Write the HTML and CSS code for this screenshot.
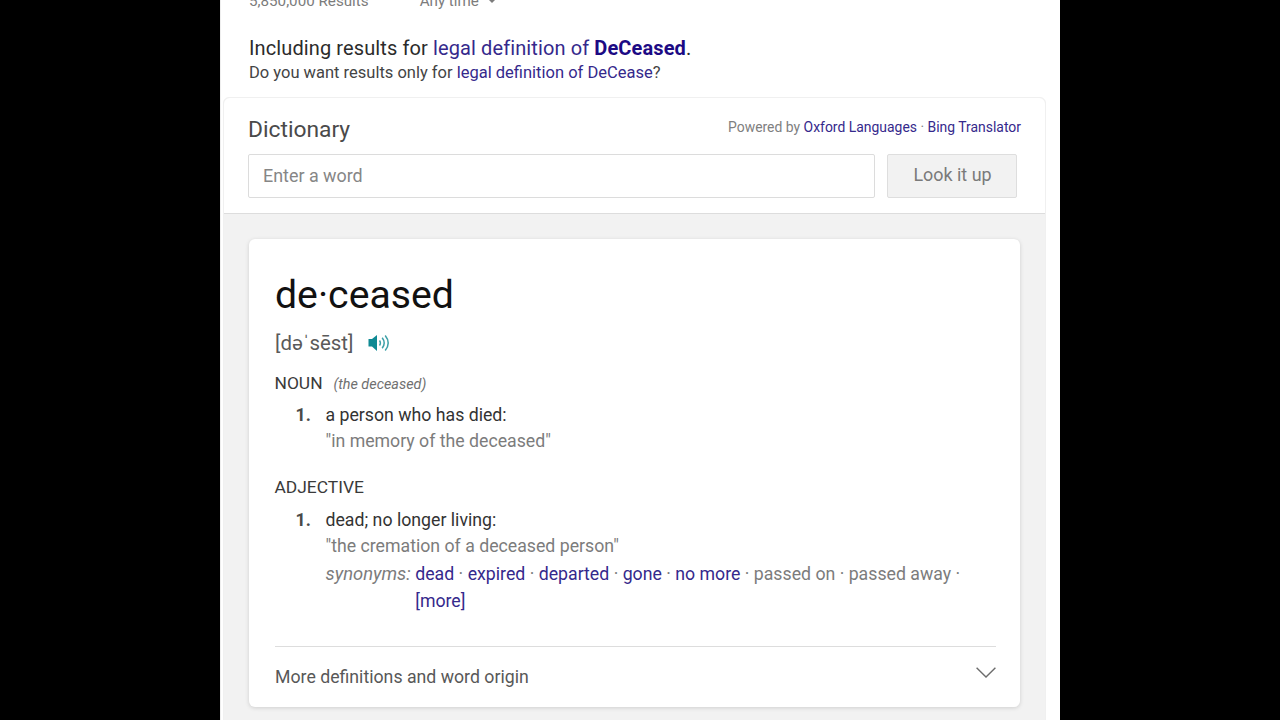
FILE: index.html
```html
<!DOCTYPE html>
<html lang="en">
<head>
    <meta charset="UTF-8">
    <meta name="viewport" content="width=device-width, initial-scale=1.0">
    <title>legal definition of DeCease</title>
    <link rel="stylesheet" href="styles.css">
</head>
<body>
    <div class="page">
        <div class="result-bar">
            <span class="count">5,850,000 Results</span>
            <span class="filter">Any time</span>
            <span class="caret"></span>
        </div>

        <div class="including"><span>Including results for <a href="#">legal definition of <strong>DeCeased</strong></a>.</span></div>
        <div class="only-for"><span>Do you want results only for <a href="#">legal definition of DeCease</a>?</span></div>

        <div class="dictionary">
            <div class="lookup">
                <div class="lookup-head">
                    <h2><span>Dictionary</span></h2>
                    <div class="powered"><span>Powered by <a href="#">Oxford Languages</a> · <a href="#">Bing Translator</a></span></div>
                </div>
                <div class="lookup-form">
                    <input type="text" class="word-input" placeholder="Enter a word">
                    <button class="look-btn">Look it up</button>
                </div>
            </div>

            <div class="entry">
                <h1><span>de·ceased</span></h1>
                <div class="pronounce">
                    <span class="phonetic">[dəˈsēst]</span>
                    <svg class="speaker" width="24" height="20" viewBox="0 0 24 20">
                        <path d="M.5 6h3.500L9 2v16L4 13.500H.5z" fill="#0f8a94"/>
                        <path d="M11.500 7.500q1.800 2.500 0 5M14.200 4.800q4 5.200 0 10.400M17.200 2.500q6 7.500 0 15" fill="none" stroke="#3da0a8" stroke-width="1.500"/>
                    </svg>
                </div>

                <div class="pos"><span>NOUN</span> <em>(the deceased)</em></div>
                <div class="sense">
                    <span class="num">1.</span>
                    <div>
                        <div class="meaning"><span>a person who has died:</span></div>
                        <div class="example"><span>"in memory of the deceased"</span></div>
                    </div>
                </div>

                <div class="pos pos-adj"><span>ADJECTIVE</span></div>
                <div class="sense">
                    <span class="num">1.</span>
                    <div>
                        <div class="meaning"><span>dead; no longer living:</span></div>
                        <div class="example"><span>"the cremation of a deceased person"</span></div>
                        <div class="synonyms">
                            <em>synonyms:</em>
                            <div class="syn-list"><a href="#">dead</a> · <a href="#">expired</a> · <a href="#">departed</a> · <a href="#">gone</a> · <a href="#">no more</a> · passed on · passed away ·<br><a href="#">[more]</a></div>
                        </div>
                    </div>
                </div>

                <div class="more">
                    <span>More definitions and word origin</span>
                    <svg width="20" height="12" viewBox="0 0 20 12">
                        <path d="M.6 1.700L10 11l9.400-9.300" fill="none" stroke="#6c6c6c" stroke-width="1.400"/>
                    </svg>
                </div>
            </div>
        </div>
    </div>
</body>
</html>
```
FILE: styles.css
```css
* {
    margin: 0;
    padding: 0;
    box-sizing: border-box;
}

body {
    font-family: Roboto, sans-serif;
    background-color: #000;
    height: 720px;
    overflow: hidden;
}

a {
    color: #35298c;
    text-decoration: none;
}

.page {
    width: 840px;
    height: 720px;
    margin: 0 auto;
    background-color: #fff;
    border-left: 1px solid #eee;
    overflow: hidden;
}

.result-bar {
    display: flex;
    align-items: center;
    height: 20px;
    margin: -9px 0 0 28px;
    font-size: 15.2px;
    color: #7c7c7c;
}

.filter {
    margin-left: 51px;
}

.caret {
    margin: 1px 0 0 10px;
    border: 3px solid transparent;
    border-top-color: #7c7c7c;
    border-bottom: 0;
}

.including {
    margin: 24px 0 0 28px;
    font-size: 20px;
    line-height: 26px;
    letter-spacing: 0.11px;
    color: #2b2b2b;
}

.including strong {
    color: #1c0a84;
}

.only-for {
    margin-left: 28px;
    font-size: 16.5px;
    line-height: 24px;
    color: #444;
}

.dictionary {
    width: 823px;
    height: 660px;
    margin: 12px 0 0 2px;
    background-color: #f2f2f2;
    border: 1px solid #f0f0f0;
    border-radius: 6px;
}

.lookup {
    height: 116px;
    padding: 20px 28px 0 24px;
    background-color: #fff;
    border-bottom: 1px solid #ddd;
    border-radius: 6px 6px 0 0;
}

.lookup-head {
    display: flex;
    justify-content: space-between;
    height: 36px;
    margin-right: -4px;
}

.lookup-head h2 {
    font-size: 22.8px;
    font-weight: 400;
    line-height: 24px;
    color: #4a4a4a;
}

.powered {
    font-size: 13.93px;
    line-height: 18px;
    color: #808080;
}

.lookup-form {
    display: flex;
    gap: 12px;
}

.word-input {
    flex: 1;
    height: 44px;
    padding: 0 14px 2px;
    border: 1px solid #dcdcdc;
    border-radius: 2px;
    font: 17.9px Roboto, sans-serif;
    outline: none;
}

.word-input::placeholder {
    color: #868686;
}

.look-btn {
    width: 130px;
    height: 44px;
    padding: 0 0 3px 1px;
    border: 1px solid #dedede;
    border-radius: 2px;
    background-color: #f2f2f2;
    font: 17.9px Roboto, sans-serif;
    color: #7a7a7a;
}

.entry {
    width: 771px;
    height: 468px;
    margin: 25px 0 0 25px;
    padding: 35px 24px 0 26px;
    background-color: #fff;
    border-radius: 6px;
    box-shadow: 0 1px 4px rgba(0, 0, 0, 0.15);
}

.entry h1 {
    font-size: 39.2px;
    font-weight: 400;
    line-height: 42px;
    color: #111;
}

.pronounce {
    display: flex;
    align-items: center;
    height: 26px;
    margin-top: 14px;
    gap: 14.5px;
    font-size: 20.4px;
    color: #5a5a5a;
}

.pos {
    height: 24px;
    margin-top: 15px;
    margin-left: -0.5px;
    font-size: 17.4px;
    line-height: 24px;
    color: #3a3a3a;
}

.pos em {
    margin-left: 6.5px;
    font-size: 14.4px;
    color: #707070;
}

.pos-adj {
    margin-top: 20px;
}

.sense {
    display: flex;
    padding-left: 20.5px;
    margin-top: 7px;
    font-size: 17.72px;
    line-height: 27px;
    color: #7c7c7c;
}

.pos-adj + .sense {
    margin-top: 8px;
}

.num {
    width: 30px;
    flex-shrink: 0;
    line-height: 26px;
    font-weight: 700;
    color: #4a4a4a;
}

.meaning {
    line-height: 26px;
    color: #333;
}

.synonyms {
    display: flex;
    gap: 4.5px;
    margin-top: 1px;
}

.synonyms em {
    font-size: 18.4px;
    line-height: 26px;
}

.more {
    display: flex;
    justify-content: space-between;
    margin-top: 31px;
    padding-top: 19px;
    border-top: 1px solid #ddd;
    font-size: 17.72px;
    line-height: 22px;
    color: #585858;
}
```
